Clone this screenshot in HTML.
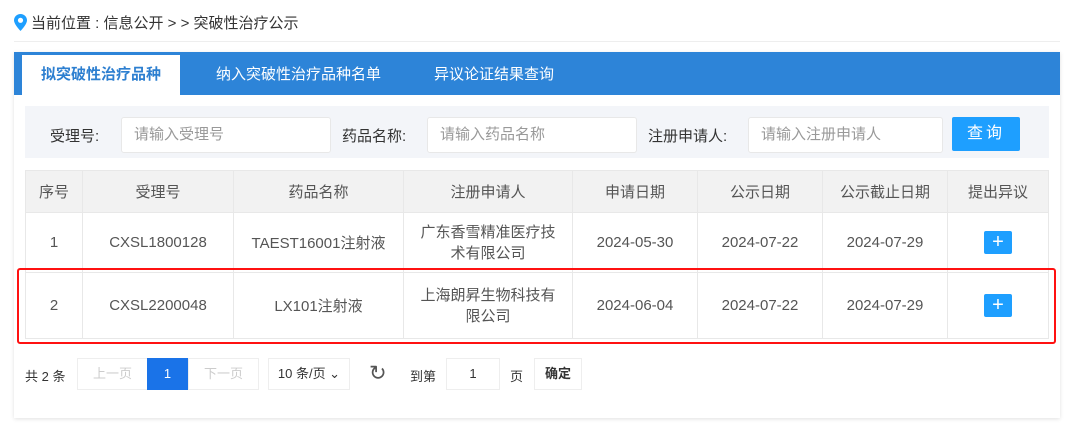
<!DOCTYPE html><html><head><meta charset="utf-8"><style>
*{box-sizing:border-box;margin:0;padding:0}
body{width:1080px;height:434px;background:#fff;font-family:"Liberation Sans","Noto Sans CJK SC",sans-serif;color:#333;position:relative;overflow:hidden}
.a{position:absolute}
.bc{left:14px;top:12px;font-size:15px;color:#333;display:flex;align-items:center;gap:4px}
.line{left:14px;top:41px;width:1046px;height:1px;background:#eee}
.card{left:14px;top:52px;width:1046px;height:366px;background:#fff;box-shadow:0 1px 4px rgba(0,0,0,.12)}
.tabs{left:14px;top:52px;width:1046px;height:43px;background:#2d84d8}
.tab{top:0;height:43px;line-height:46px;color:#fff;font-size:15px}
.tab.on{background:#fff;color:#2d7fd0;font-weight:bold;top:3px;height:40px;line-height:40px;text-align:center}
.srch{left:25px;top:106px;width:1024px;height:52px;background:#f3f5f9}
.lab{font-size:15px;color:#333;top:125px}
.inp{top:117px;height:36px;background:#fff;border:1px solid #e8e8e8;border-radius:3px;font-size:15px;color:#999;line-height:34px;padding-left:12px}
.btn{left:952px;top:117px;width:68px;height:34px;background:#1e9fff;color:#fff;font-size:16px;text-align:center;line-height:34px;border-radius:2px;letter-spacing:3px}
table{position:absolute;left:25px;top:170px;width:1024px;border-collapse:collapse;font-size:15px;color:#555}
td,th{border:1px solid #e8e8e8;text-align:center;font-weight:normal}
th{background:#f2f2f2;height:42px;color:#555}
.plus{display:inline-block;width:28px;height:23px;background:#1e9fff;color:#fff;border-radius:2px;line-height:22px;font-size:20px}
.red{left:17px;top:268px;width:1039px;height:76px;border:2px solid #f11;border-radius:3px}
.pg{top:358px;height:32px;border:1px solid #eee;font-size:13px;line-height:30px;text-align:center;background:#fff}
</style></head><body>
<div class="a bc"><svg width="13" height="17" viewBox="0 0 13 17"><path d="M6.5 0C2.9 0 0 2.8 0 6.3 0 10.5 6.5 17 6.5 17S13 10.5 13 6.3C13 2.8 10.1 0 6.5 0z" fill="#1e9fff"/><circle cx="6.5" cy="6.3" r="2.6" fill="#fff"/></svg>当前位置 : 信息公开 &gt; &gt; 突破性治疗公示</div>
<div class="a line"></div>
<div class="a card"></div>
<div class="a tabs">
<div class="a tab on" style="left:8px;width:158px">拟突破性治疗品种</div>
<div class="a tab" style="left:202px">纳入突破性治疗品种名单</div>
<div class="a tab" style="left:420px">异议论证结果查询</div>
</div>
<div class="a srch"></div>
<div class="a lab" style="left:50px">受理号:</div>
<div class="a inp" style="left:121px;width:210px">请输入受理号</div>
<div class="a lab" style="left:342px">药品名称:</div>
<div class="a inp" style="left:427px;width:210px">请输入药品名称</div>
<div class="a lab" style="left:648px">注册申请人:</div>
<div class="a inp" style="left:748px;width:195px">请输入注册申请人</div>
<div class="a btn">查询</div>
<table>
<tr><th style="width:57px">序号</th><th style="width:151px">受理号</th><th style="width:170px">药品名称</th><th style="width:169px">注册申请人</th><th style="width:125px">申请日期</th><th style="width:125px">公示日期</th><th style="width:125px">公示截止日期</th><th>提出异议</th></tr>
<tr style="height:60px"><td>1</td><td>CXSL1800128</td><td>TAEST16001注射液</td><td style="line-height:21px">广东香雪精准医疗技<br>术有限公司</td><td>2024-05-30</td><td>2024-07-22</td><td>2024-07-29</td><td><span class="plus">+</span></td></tr>
<tr style="height:66px"><td>2</td><td>CXSL2200048</td><td>LX101注射液</td><td style="line-height:21px">上海朗昇生物科技有<br>限公司</td><td>2024-06-04</td><td>2024-07-22</td><td>2024-07-29</td><td><span class="plus">+</span></td></tr>
</table>
<div class="a red"></div>
<div class="a" style="left:25px;top:366px;font-size:13px">共 2 条</div>
<div class="a pg" style="left:77px;width:71px;color:#ccc">上一页</div>
<div class="a pg" style="left:147px;width:41px;background:#1a73e8;color:#fff;border-color:#1a73e8">1</div>
<div class="a pg" style="left:188px;width:71px;color:#ccc">下一页</div>
<div class="a pg" style="left:268px;width:82px;color:#333">10 条/页 ⌄</div>
<div class="a" style="left:369px;top:361px;font-size:21px;color:#555">↻</div>
<div class="a" style="left:410px;top:366px;font-size:13px">到第</div>
<div class="a pg" style="left:446px;width:54px">1</div>
<div class="a" style="left:510px;top:366px;font-size:13px">页</div>
<div class="a pg" style="left:534px;width:48px;font-weight:bold">确定</div>
</body></html>
